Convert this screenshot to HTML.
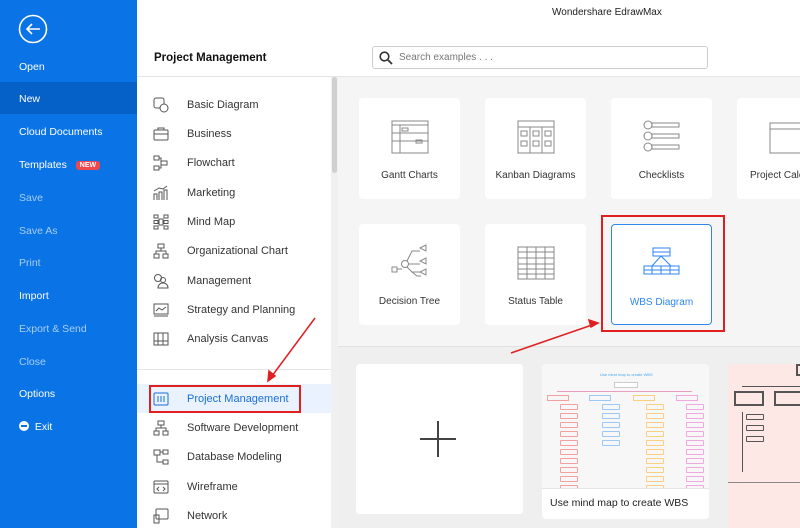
<!DOCTYPE html>
<html><head><meta charset="utf-8"><style>
*{margin:0;padding:0;box-sizing:border-box}
body{width:800px;height:528px;overflow:hidden;font-family:"Liberation Sans",sans-serif;background:#fff;position:relative}
.sb{position:absolute;left:0;top:0;width:137px;height:528px;background:#0a74e6;color:#fff}
.sb div{position:absolute;left:19px;font-size:10.5px}
.sb .dim{color:#a9cdf7}
.new{position:absolute;left:0;top:82px;width:137px;height:32px;background:#0560c7}
.mid{position:absolute;left:137px;top:0;width:194px;height:528px;background:#fff}
.item{position:absolute;left:0;width:194px;height:28px;font-size:11px;color:#333;line-height:28px;padding-left:50px}
.item svg{position:absolute;left:16px;top:6px}
.right{position:absolute;left:338px;top:77px;width:462px;height:451px;background:#f5f5f5}
.card{position:absolute;width:101px;height:101px;background:#fff;border-radius:4px;font-size:10px;color:#333;text-align:center}
.card span{position:absolute;left:0;right:0;top:72px}
.card svg{position:absolute;left:32px;top:22px}
.col{position:absolute;display:flex;flex-direction:column;gap:3px}
.col i{display:block;height:6px;border:1.5px solid;border-radius:1px}
</style></head><body>
<div class="sb">
<svg style="position:absolute;left:18px;top:14px" width="30" height="30" viewBox="0 0 30 30"><circle cx="15" cy="15" r="13.5" fill="none" stroke="#fff" stroke-width="1.6"/><path d="M22 15H9M14 10l-5 5 5 5" fill="none" stroke="#fff" stroke-width="1.6"/></svg>
<div style="top:61px">Open</div>
<div class="new" style="left:0"></div>
<div style="top:93px">New</div>
<div style="top:126px">Cloud Documents</div>
<div style="top:159px">Templates <span style="background:#f0474f;border-radius:3px;font-size:7px;font-weight:bold;padding:1px 4px;margin-left:6px;vertical-align:1px">NEW</span></div>
<div class="dim" style="top:192px">Save</div>
<div class="dim" style="top:225px">Save As</div>
<div class="dim" style="top:257px">Print</div>
<div style="top:290px">Import</div>
<div class="dim" style="top:323px">Export &amp; Send</div>
<div class="dim" style="top:356px">Close</div>
<div style="top:388px">Options</div>
<div style="top:421px"><span style="display:inline-block;width:10px;height:10px;border-radius:50%;background:#fff;position:relative;vertical-align:-1px"><span style="position:absolute;left:2px;top:4px;width:6px;height:2px;background:#0a74e6"></span></span>&nbsp; Exit</div>
</div>
<div style="position:absolute;left:552px;top:7px;font-size:10px;color:#222">Wondershare EdrawMax</div>
<div style="position:absolute;left:154px;top:52px;font-size:11.5px;font-weight:bold;color:#111">Project Management</div>
<div style="position:absolute;left:372px;top:46px;width:336px;height:23px;border:1px solid #ccc;border-radius:3px;font-size:10px;color:#777;padding:5px 0 0 26px">Search examples . . .
<svg style="position:absolute;left:6px;top:4px" width="14" height="14" viewBox="0 0 14 14"><circle cx="5.5" cy="5.5" r="4.3" fill="none" stroke="#333" stroke-width="1.6"/><path d="M9 9l4 4" stroke="#333" stroke-width="1.8"/></svg></div>
<div style="position:absolute;left:137px;top:76px;width:663px;height:1px;background:#e4e4e4"></div>
<div class="mid" style="top:77px;height:451px">
<div style="position:absolute;left:0;top:292px;width:194px;height:1px;background:#e6e6e6"></div>
<div style="position:absolute;left:0;top:307px;width:194px;height:29px;background:#e9f2fd"></div>
<div style="position:absolute;left:12px;top:308px;width:152px;height:28px;border:2px solid #e02020"></div>
</div>
<div style="position:absolute;left:331px;top:77px;width:7px;height:451px;background:#f0f0f0"><div style="position:absolute;left:1px;top:0;width:5px;height:96px;background:#d0d0d0;border-radius:3px"></div></div>
<div style="position:absolute;left:137px;top:0">
<div class="item" style="top:91px"><svg width="16" height="16" viewBox="0 0 16 16" fill="none" stroke="#555"><rect x="1" y="1" width="10" height="10" rx="2"/><circle cx="11" cy="11" r="4" fill="#fff"/></svg>Basic Diagram</div>
<div class="item" style="top:120px"><svg width="16" height="16" fill="none" stroke="#555"><rect x="1" y="4" width="14" height="10" rx="1"/><path d="M5 4V2h6v2M1 8h14"/></svg>Business</div>
<div class="item" style="top:149px"><svg width="16" height="16" fill="none" stroke="#555"><rect x="1" y="1" width="5" height="4"/><rect x="8" y="6" width="6" height="4"/><rect x="1" y="11" width="5" height="4"/><path d="M6 3h2v3M6 13h2v-3"/></svg>Flowchart</div>
<div class="item" style="top:179px"><svg width="16" height="16" fill="none" stroke="#555"><path d="M1 15V9h3v6M6 15V7h3v8M11 15V5h3v10M1 6l5-3 4 1 4-3"/></svg>Marketing</div>
<div class="item" style="top:208px"><svg width="16" height="16" fill="none" stroke="#555"><rect x="6" y="5" width="4" height="6"/><rect x="1" y="1" width="4" height="3"/><rect x="1" y="12" width="4" height="3"/><rect x="11" y="1" width="4" height="3"/><rect x="11" y="12" width="4" height="3"/><rect x="1" y="6.5" width="4" height="3"/><rect x="11" y="6.5" width="4" height="3"/></svg>Mind Map</div>
<div class="item" style="top:237px"><svg width="16" height="16" fill="none" stroke="#555"><rect x="5" y="1" width="6" height="4"/><rect x="1" y="11" width="5" height="4"/><rect x="10" y="11" width="5" height="4"/><path d="M8 5v3M3 11V8h10v3"/></svg>Organizational Chart</div>
<div class="item" style="top:267px"><svg width="16" height="16" fill="none" stroke="#555"><circle cx="5" cy="5" r="3.5"/><circle cx="10" cy="7" r="2.5"/><path d="M5 15c0-3 2-5 5-5s5 2 5 5z"/></svg>Management</div>
<div class="item" style="top:296px"><svg width="16" height="16" fill="none" stroke="#555"><rect x="1" y="2" width="14" height="10"/><path d="M3 9l3-3 3 2 4-3M1 14h14"/></svg>Strategy and Planning</div>
<div class="item" style="top:325px"><svg width="16" height="16" fill="none" stroke="#555"><rect x="1" y="2" width="14" height="12"/><path d="M5 2v12M10 2v12M1 10h14"/></svg>Analysis Canvas</div>
<div class="item" style="top:385px;color:#1a6fd6"><svg width="16" height="16" fill="none" stroke="#1a6fd6"><rect x="1" y="2" width="14" height="12" rx="1"/><path d="M5 5v6M8 5v6M11 5v6"/></svg>Project Management</div>
<div class="item" style="top:414px"><svg width="16" height="16" fill="none" stroke="#555"><rect x="5" y="1" width="6" height="4"/><rect x="1" y="11" width="5" height="4"/><rect x="10" y="11" width="5" height="4"/><path d="M8 5v3M3 11V8h10v3"/></svg>Software Development</div>
<div class="item" style="top:443px"><svg width="16" height="16" fill="none" stroke="#555"><rect x="1" y="1" width="6" height="5"/><rect x="10" y="1" width="5" height="4"/><rect x="10" y="11" width="5" height="4"/><path d="M7 3h3M4 6v7h6"/></svg>Database Modeling</div>
<div class="item" style="top:473px"><svg width="16" height="16" fill="none" stroke="#555"><rect x="1" y="2" width="14" height="12" rx="1"/><path d="M1 5h14M6 8l-2 2 2 2M10 8l2 2-2 2"/></svg>Wireframe</div>
<div class="item" style="top:502px"><svg width="16" height="16" fill="none" stroke="#555"><rect x="3" y="1" width="12" height="10" rx="1"/><rect x="1" y="7" width="5" height="8"/></svg>Network</div>
</div>
<div class="right">
<div style="position:absolute;left:0;top:269px;width:462px;height:182px;background:#efefef;border-top:1px solid #e2e2e2"></div>
<div class="card" style="left:21px;top:21px"><svg width="38" height="34" fill="none" stroke="#888"><rect x="1" y="1" width="36" height="32"/><path d="M1 5h36M1 13h36M1 21h36M9 5v28" /><rect x="11" y="8" width="6" height="3"/><rect x="25" y="20" width="6" height="3"/></svg><span>Gantt Charts</span></div>
<div class="card" style="left:147px;top:21px"><svg width="38" height="34" fill="none" stroke="#888"><rect x="1" y="1" width="36" height="32"/><path d="M1 7h36M13 7v26M25 7v26"/><rect x="4" y="11" width="6" height="5"/><rect x="16" y="11" width="6" height="5"/><rect x="28" y="11" width="6" height="5"/><rect x="4" y="21" width="6" height="5"/><rect x="16" y="21" width="6" height="5"/><rect x="28" y="21" width="6" height="5"/></svg><span>Kanban Diagrams</span></div>
<div class="card" style="left:273px;top:21px"><svg width="38" height="34" fill="none" stroke="#888"><circle cx="5" cy="5" r="4"/><circle cx="5" cy="16" r="4"/><circle cx="5" cy="27" r="4"/><rect x="9" y="3" width="27" height="4"/><rect x="9" y="14" width="27" height="4"/><rect x="9" y="25" width="27" height="4"/></svg><span>Checklists</span></div>
<div class="card" style="left:399px;top:21px;width:70px"><svg width="38" height="34" fill="none" stroke="#888" style="left:32px"><rect x="1" y="3" width="36" height="30"/><path d="M1 9h36"/></svg><span style="text-align:left;left:13px">Project Cale</span></div>
<div class="card" style="left:21px;top:147px"><svg width="38" height="38" fill="none" stroke="#888" style="top:19px"><rect x="1" y="24" width="5" height="5"/><circle cx="14" cy="21" r="3.5"/><path d="M6 26h5M16 18l5-10h8M16 24l5 5h8M17 21h12M21 29l5 4h4"/><path d="M29 5l6-3v6zM29 18l6-3v6zM29 29l6-3v6z"/></svg><span>Decision Tree</span></div>
<div class="card" style="left:147px;top:147px"><svg width="38" height="34" fill="none" stroke="#888"><rect x="1" y="1" width="36" height="32"/><path d="M1 6h36M1 12h36M1 18h36M1 23h36M1 28h36M10 1v32M19 1v32M28 1v32"/></svg><span>Status Table</span></div>
<div class="card" style="left:273px;top:147px;border:1px solid #2f86f0"><svg width="38" height="34" fill="none" stroke="#2f86f0" style="left:31px;top:21px"><rect x="10" y="2" width="17" height="8"/><path d="M10 6h17M18 10L9 20M18 10l10 10"/><rect x="1" y="20" width="35" height="8"/><path d="M1 24h35M9 20v8M18 20v8M27 20v8"/></svg><span style="color:#2f86f0">WBS Diagram</span></div>
<div style="position:absolute;left:263px;top:138px;width:124px;height:117px;border:2px solid #e02020"></div>
<div class="card" style="left:18px;top:287px;width:167px;height:150px"><div style="position:absolute;left:64px;top:74px;width:36px;height:2px;background:#444"></div><div style="position:absolute;left:81px;top:57px;width:2px;height:36px;background:#444"></div></div>
<div class="card" style="left:204px;top:287px;width:167px;height:155px;overflow:hidden">
<div style="position:absolute;left:0;top:0;width:167px;height:125px;background:#f7f7f7;overflow:hidden;border-bottom:1px solid #e6e6e6">
<div style="position:absolute;left:58px;top:8px;font-size:4px;color:#4aa8f0">Use mind map to create WBS</div>
<div style="position:absolute;left:72px;top:18px;width:24px;height:6px;border:1px solid #ccc;background:#fff"></div>
<div style="position:absolute;left:15px;top:27px;width:135px;height:1px;background:#e8a0c0"></div>
<div style="position:absolute;left:5px;top:31px;width:22px;height:6px;border:1.5px solid #f5a0a0"></div>
<div class="col" style="left:18px;top:40px;width:18px;color:#f5a0a0"><i></i><i></i><i></i><i></i><i></i><i></i><i></i><i></i><i></i><i></i></div>
<div style="position:absolute;left:47px;top:31px;width:22px;height:6px;border:1.5px solid #9cc8f5"></div>
<div class="col" style="left:60px;top:40px;width:18px;color:#9cc8f5"><i></i><i></i><i></i><i></i><i></i></div>
<div style="position:absolute;left:91px;top:31px;width:22px;height:6px;border:1.5px solid #f8d080"></div>
<div class="col" style="left:104px;top:40px;width:18px;color:#f8d080"><i></i><i></i><i></i><i></i><i></i><i></i><i></i><i></i><i></i><i></i><i></i><i></i></div>
<div style="position:absolute;left:134px;top:31px;width:22px;height:6px;border:1.5px solid #f0a8e0"></div>
<div class="col" style="left:144px;top:40px;width:18px;color:#f0a8e0"><i></i><i></i><i></i><i></i><i></i><i></i><i></i><i></i><i></i><i></i><i></i></div>
</div>
<span style="top:133px;text-align:left;left:8px;font-size:10.5px;color:#222">Use mind map to create WBS</span></div>
<div style="position:absolute;left:390px;top:287px;width:80px;height:164px;background:#fde8e6;border-radius:4px 0 0 0">
<div style="position:absolute;left:68px;top:0;width:12px;height:12px;border:2px solid #555"></div>
<div style="position:absolute;left:14px;top:22px;width:66px;height:1px;background:#555"></div>
<div style="position:absolute;left:0;top:118px;width:80px;height:1px;background:#888"></div><div style="position:absolute;left:6px;top:27px;width:30px;height:15px;border:2px solid #555"></div><div style="position:absolute;left:46px;top:27px;width:34px;height:15px;border:2px solid #555"></div><div style="position:absolute;left:14px;top:48px;width:20px;height:60px;border-left:1px solid #555"></div>
<div class="col" style="left:18px;top:50px;width:18px;color:#555;gap:5px"><i></i><i></i><i></i></div></div>
</div>
<svg style="position:absolute;left:0;top:0" width="800" height="528"><g stroke="#e02020" stroke-width="1.5" fill="#e02020"><path d="M315 318L272 376"/><path d="M268 381l1-10 6 5z"/><path d="M511 353L592 325"/><path d="M598 323l-9-3 2 7z"/></g></svg>
</body></html>
